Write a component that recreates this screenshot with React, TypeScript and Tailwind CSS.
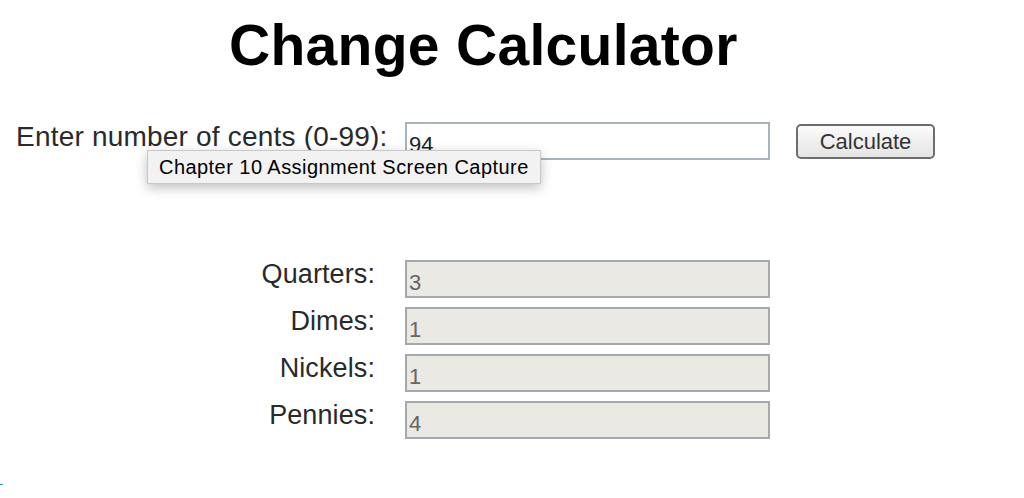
import React from "react";

const rows = [
  { label: "Quarters:", value: "3" },
  { label: "Dimes:", value: "1" },
  { label: "Nickels:", value: "1" },
  { label: "Pennies:", value: "4" },
];

export default function App() {
  return (
    <div className="relative w-[1024px] h-[498px] overflow-hidden bg-white text-[#2a2a2a] font-['Liberation_Sans',Arial,sans-serif]">
      {/* Title */}
      <h1 className="pt-[12px] pl-[229px] text-[57px] leading-[66px] font-bold text-black tracking-[0.3px]">
        Change Calculator
      </h1>

      {/* Input row */}
      <div className="flex items-start mt-[44px]">
        <label className="w-[405px] pl-[16px] text-[28px] leading-[30px] tracking-[0.2px]">
          Enter number of cents (0-99):
        </label>
        <input
          readOnly
          value="94"
          className="w-[365px] h-[38px] border-2 border-[#a9b3bf] bg-white px-[2px] pt-[8px] text-[22px] leading-[26px] text-[#222] outline-none"
        />
        <button className="ml-[26px] mt-[2px] w-[139px] h-[35px] rounded-[5px] border-2 border-[#6d6d6d] bg-gradient-to-b from-[#fbfbfb] to-[#e4e4e4] text-[22px] leading-[26px] text-[#333]">
          Calculate
        </button>
      </div>

      {/* Results */}
      <div className="flex flex-col gap-[9px] mt-[100px]">
        {rows.map((r) => (
          <div key={r.label} className="flex items-start">
            <span className="w-[375px] text-right text-[27px] leading-[28px] tracking-[0.1px]">{r.label}</span>
            <input
              readOnly
              value={r.value}
              className="ml-[30px] w-[365px] h-[38px] border-2 border-[#a4a9ae] bg-[#ebe9e3] px-[2px] pt-[8px] text-[22px] leading-[26px] text-[#666] outline-none"
            />
          </div>
        ))}
      </div>

      {/* Tooltip */}
      <div className="absolute left-[147px] top-[150px] h-[34px] px-[11px] flex items-center bg-[#f2f2f2] border border-[#c8c8c8] shadow-[0_4px_12px_rgba(0,0,0,0.25)] text-[20px] text-black tracking-[0.45px]">
        Chapter 10 Assignment Screen Capture
      </div>

      {/* stray mark */}
      <div className="absolute left-0 top-[484px] w-[3px] h-[1px] bg-[#3a8fb7]" />
    </div>
  );
}
